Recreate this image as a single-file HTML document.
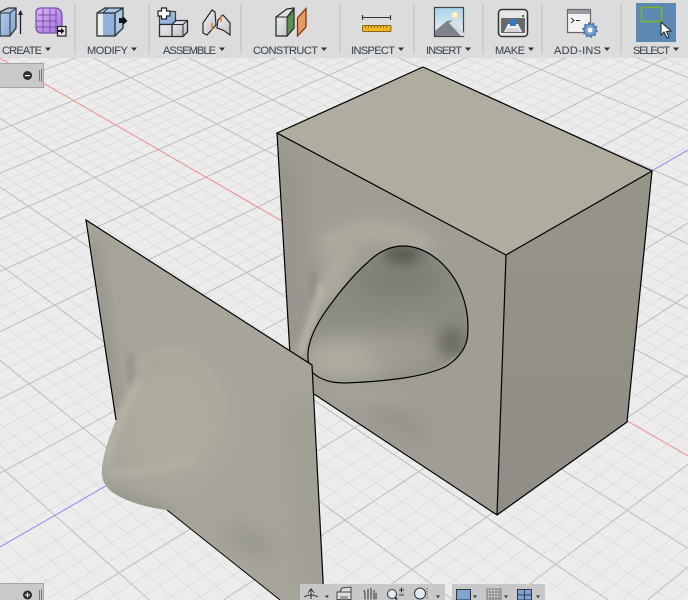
<!DOCTYPE html>
<html><head><meta charset="utf-8"><title>CAD</title>
<style>
html,body{margin:0;padding:0;background:#ececec;width:688px;height:600px;overflow:hidden}
svg{display:block;position:absolute;left:0;top:0;overflow:hidden}
text{font-family:"Liberation Sans",sans-serif;font-size:11px;fill:#3f4a56;stroke:#3f4a56;stroke-width:.12}
</style></head><body>
<svg id="s" width="688" height="600" viewBox="0 0 688 600" xmlns="http://www.w3.org/2000/svg">
<defs>
<filter id="b2" filterUnits="userSpaceOnUse" x="0" y="0" width="688" height="600"><feGaussianBlur stdDeviation="2"/></filter>
<filter id="b3" filterUnits="userSpaceOnUse" x="0" y="0" width="688" height="600"><feGaussianBlur stdDeviation="3.500"/></filter>
<filter id="b6" filterUnits="userSpaceOnUse" x="0" y="0" width="688" height="600"><feGaussianBlur stdDeviation="7"/></filter>
<filter id="b9" filterUnits="userSpaceOnUse" x="0" y="0" width="688" height="600"><feGaussianBlur stdDeviation="10"/></filter>
<filter id="b12" filterUnits="userSpaceOnUse" x="0" y="0" width="688" height="600"><feGaussianBlur stdDeviation="13"/></filter>
<clipPath id="cLeft"><path d="M277 133L506 255L497 515L314 394L290 355Z"/></clipPath>
<clipPath id="cHole"><path d="M312 372C305 360 307 345 316 327C326 308 350 278 367 263C378 252 390 246 403 246C425 246 445 262 457 283C466 300 470 320 467 340C464 352 455 361 445 367C425 376 395 381 345 383C328 383 318 378 312 372Z"/></clipPath>
<clipPath id="cSheet"><path d="M86 220L312 365L324 600L280 600L167 510C150 508 128 503 112 492C104 486 101 478 102 468C104 450 110 436 116 420Z"/></clipPath>
<linearGradient id="gTop" x1="0" y1="0" x2="1" y2="1"><stop offset="0" stop-color="#afac9f"/><stop offset="1" stop-color="#b0ada1"/></linearGradient>
<linearGradient id="gRight" x1="0" y1="0" x2="0" y2="1"><stop offset="0" stop-color="#979489"/><stop offset="1" stop-color="#8f8d85"/></linearGradient>
<linearGradient id="sky" x1="0" y1="0" x2="0" y2="1"><stop offset="0" stop-color="#a9d4ec"/><stop offset="1" stop-color="#e8f2f2"/></linearGradient>
<linearGradient id="blue" x1="0" y1="0" x2="1" y2="1"><stop offset="0" stop-color="#b5cfea"/><stop offset="1" stop-color="#7fa4cf"/></linearGradient>
<linearGradient id="grey" x1="0" y1="0" x2="1" y2="1"><stop offset="0" stop-color="#f4f4f6"/><stop offset="1" stop-color="#b9bec6"/></linearGradient>
<linearGradient id="purp" x1="0" y1="0" x2="1" y2="1"><stop offset="0" stop-color="#d7b6f0"/><stop offset="1" stop-color="#a56fdc"/></linearGradient>
</defs>

<rect width="688" height="600" fill="#ececec"/>
<g id="grid" fill="none"></g>
<line x1="0" y1="58" x2="688" y2="456" stroke="#f08c8c" stroke-width="1"/>
<line x1="0" y1="547" x2="688" y2="150" stroke="#8a8af0" stroke-width="1"/>

<!-- box -->
<path d="M423 67L652 171L506 255L277 133Z" fill="url(#gTop)"/>
<path d="M652 171L506 255L497 515L627 422Z" fill="url(#gRight)"/>
<path d="M277 133L506 255L497 515L314 394L290 355Z" fill="#a09e94"/>
<g clip-path="url(#cLeft)">
<path d="M284 150L296 350" stroke="#94938a" stroke-width="26" fill="none" filter="url(#b12)"/>
<path d="M322 250C350 225 395 225 430 250" stroke="#aeac9f" stroke-width="20" fill="none" filter="url(#b6)"/>
<path d="M325 300C330 280 337 262 352 248" stroke="#aeac9f" stroke-width="18" fill="none" filter="url(#b6)"/>
<path d="M314 272L313 300" stroke="#7f7e75" stroke-width="4" fill="none" filter="url(#b3)"/>
<path d="M322 285C316 310 306 335 300 355" stroke="#bdbbae" stroke-width="6" fill="none" filter="url(#b3)"/>
<path d="M375 408L425 435" stroke="#8d8c83" stroke-width="12" fill="none" filter="url(#b9)"/>
<path d="M330 392C350 392 370 395 400 400" stroke="#aba99c" stroke-width="6" fill="none" filter="url(#b6)"/>
</g>
<path d="M312 372C305 360 307 345 316 327C326 308 350 278 367 263C378 252 390 246 403 246C425 246 445 262 457 283C466 300 470 320 467 340C464 352 455 361 445 367C425 376 395 381 345 383C328 383 318 378 312 372Z" fill="#8c8b81"/>
<g clip-path="url(#cHole)">
<ellipse cx="345" cy="360" rx="50" ry="24" fill="#b0aea1" filter="url(#b12)"/>
<ellipse cx="405" cy="352" rx="38" ry="20" fill="#a09e93" filter="url(#b12)"/>
<ellipse cx="400" cy="280" rx="45" ry="18" fill="#7d7c73" filter="url(#b12)"/>
<ellipse cx="403" cy="254" rx="20" ry="8" fill="#504f49" filter="url(#b6)"/>
<ellipse cx="452" cy="342" rx="13" ry="15" fill="#6d6c64" filter="url(#b6)"/>
<path d="M420 377C435 374 448 366 456 358" stroke="#aaa89c" stroke-width="3" fill="none" filter="url(#b2)"/>
</g>
<g fill="none" stroke="#000" stroke-width="1.200">
<path d="M423 67L652 171L506 255L277 133Z"/>
<path d="M506 255L497 515M652 171L627 422L497 515L314 394M277 133L290 355"/>
<path d="M312 372C305 360 307 345 316 327C326 308 350 278 367 263C378 252 390 246 403 246C425 246 445 262 457 283C466 300 470 320 467 340C464 352 455 361 445 367C425 376 395 381 345 383C328 383 318 378 312 372Z"/>
</g>

<!-- sheet -->
<path d="M86 220L312 365L324 600L280 600L167 510C150 508 128 503 112 492C104 486 101 478 102 468C104 450 110 436 116 420Z" fill="#a7a59a"/>
<g clip-path="url(#cSheet)">
<ellipse cx="170" cy="420" rx="50" ry="60" fill="#aeac9e" filter="url(#b12)"/>
<path d="M140 365C160 340 205 350 220 395C230 435 190 455 125 472" stroke="#aeac9f" stroke-width="6" fill="none" filter="url(#b3)"/>
<path d="M108 472C130 476 165 470 195 458" stroke="#b4b2a5" stroke-width="5" fill="none" filter="url(#b3)"/>
<path d="M106 490C125 502 145 508 170 512" stroke="#8e8d82" stroke-width="9" fill="none" filter="url(#b6)"/>
<path d="M130 355L131 385" stroke="#85847b" stroke-width="4" fill="none" filter="url(#b3)"/>
<path d="M92 240L116 410" stroke="#949389" stroke-width="12" fill="none" filter="url(#b6)"/>
<path d="M140 380C125 405 112 435 106 465" stroke="#b8b6a9" stroke-width="6" fill="none" filter="url(#b3)"/>
<path d="M228 530L272 552" stroke="#8f8e85" stroke-width="12" fill="none" filter="url(#b9)"/>
<path d="M300 400L315 590" stroke="#9e9c92" stroke-width="26" fill="none" filter="url(#b12)"/>
</g>
<g fill="none" stroke="#000" stroke-width="1.200">
<path d="M116 420L86 220L312 365L324 600"/>
<path d="M167 510L280 600" stroke-width="1"/>
</g>

<!-- toolbar -->
<rect width="688" height="58" fill="#dcdcdc"/>
<g fill="#cdcdcd">
<rect x="74" y="4" width="2" height="50"/><rect x="148" y="4" width="2" height="50"/><rect x="240" y="4" width="2" height="50"/><rect x="339" y="4" width="2" height="50"/><rect x="413" y="4" width="2" height="50"/><rect x="482" y="4" width="2" height="50"/><rect x="541" y="4" width="2" height="50"/><rect x="620" y="4" width="2" height="50"/>
</g>

<!-- create -->
<path d="M0 12L8 8H16V28L10 36H0Z" fill="url(#blue)" stroke="#333" stroke-width="1.300"/>
<path d="M0 13H10V36M10 13L16 8" stroke="#333" fill="none"/>
<path d="M20.500 34V11" stroke="#222" stroke-width="1.300"/><path d="M18 15L20.500 10L23 15Z" fill="#222"/>
<path d="M41 8H56Q62 9 62 16V28Q62 33 57 33H42Q36 33 36 27V13Q36 8 41 8Z" fill="url(#purp)" stroke="#7a4fb0" stroke-width="1.300"/>
<path d="M38 15H56M37 21H57M37 27H57M43 9V33M50 9V33M56 9V33" stroke="#7a4fb0" fill="none"/>
<rect x="57.500" y="26.500" width="8.500" height="9.500" fill="#e8e8e8" stroke="#222" stroke-width="1.200"/>
<path d="M58 30H61V28L64.500 31L61 34V32H58Z" fill="#111"/>
<text x="2" y="54" textLength="40">CREATE</text>
<path d="M45 47.500H51L48 51Z" fill="#333"/>

<!-- modify -->
<path d="M105 8H123V28L115 36H97V13Z" fill="#a9c6e6"/>
<path d="M103 13H115V36H103Z" fill="#8fb1da"/>
<path d="M97 13H103V36H97Z" fill="#eceef0"/>
<path d="M97 13L105 8H123V28L115 36H97ZM97 13H115V36M115 13L123 8" stroke="#2b2b2b" stroke-width="1.300" fill="none"/>
<path d="M103 13L108 8" stroke="#2b2b2b" fill="none"/>
<path d="M119 18H123V16L127.500 21L123 25V23H119Z" fill="#111"/>
<text x="87" y="54" textLength="41">MODIFY</text>
<path d="M131 47.500H137L134 51Z" fill="#333"/>

<!-- assemble -->
<rect x="159.500" y="11.500" width="16" height="13" fill="url(#blue)" stroke="#345" stroke-width="1.200"/>
<path d="M159.500 24.500H172V36.500H159.500ZM172 24.500L176 20.500H187.500V32L183 36.500H172Z" fill="url(#grey)" stroke="#2b2b2b" stroke-width="1.300"/>
<path d="M172 24.500H183V36.500M183 24.500L187.500 20.500" stroke="#2b2b2b" fill="none"/>
<path d="M161.500 8H166.500V11H170V16H166.500V19H161.500V16H158V11H161.500Z" fill="#fff" stroke="#222" stroke-width="1.200"/>
<path d="M203 23L212 10L215 12L216 25L207 35L203 33Z" fill="url(#grey)" stroke="#2b2b2b" stroke-width="1.200"/>
<path d="M218 20L223 15L230 23V35L223 30L217 28Z" fill="url(#grey)" stroke="#2b2b2b" stroke-width="1.200"/>
<path d="M212 23V30M221 15V22" stroke="#f07a10" stroke-width="1.500"/>
<text x="163" y="54" textLength="53">ASSEMBLE</text>
<path d="M219 47.500H225L222 51Z" fill="#333"/>

<!-- construct -->
<path d="M276 17L287 9L294 8V28L287 36H276Z" fill="url(#grey)" stroke="#2b2b2b" stroke-width="1.300"/>
<path d="M287 18V36L294 28V9L287 18Z" fill="#5b8f4d" stroke="#2b2b2b"/>
<path d="M276 17H287L294 8" stroke="#2b2b2b" fill="none"/>
<path d="M297.500 18L306 8.500V27L297.500 36Z" fill="#e89a63" stroke="#7a3008" stroke-width="1.200"/>
<text x="253" y="54" textLength="65">CONSTRUCT</text>
<path d="M321 47.500H327L324 51Z" fill="#333"/>

<!-- inspect -->
<path d="M362.500 15V20M390.500 15V20M362.500 17.500H390.500" stroke="#333" fill="none" stroke-width="1.100"/>
<rect x="362.500" y="25.500" width="28.500" height="6" rx="1" fill="#f0b429" stroke="#8a6a10"/>
<path d="M365.500 26V28M368.500 26V28M371.500 26V28M374.500 26V28M377.500 26V28M380.500 26V28M383.500 26V28M386.500 26V28" stroke="#8a6a10"/>
<text x="351" y="54" textLength="44">INSPECT</text>
<path d="M398 47.500H404L401 51Z" fill="#333"/>

<!-- insert -->
<rect x="434.500" y="7.500" width="29" height="29" fill="url(#sky)" stroke="#444" stroke-width="1.200"/>
<circle cx="455" cy="15" r="3" fill="#fff4c8" stroke="#f4e6a8"/>
<path d="M435 31L447 21L453 20L464 35V36H435Z" fill="#7d828c"/>
<path d="M453 20L464 33V36H461L449 23Z" fill="#d8dadd"/>
<text x="426" y="54" textLength="36">INSERT</text>
<path d="M465 47.500H471L468 51Z" fill="#333"/>

<!-- make -->
<rect x="498.500" y="9.500" width="29" height="27" rx="3.500" fill="#e6e6e6" stroke="#333" stroke-width="1.500"/>
<rect x="501" y="18" width="24" height="15" fill="#66696d"/>
<path d="M504 32L508 24H518L522 32Z" fill="#f0f0f0"/>
<path d="M507 29H519M506 31H520" stroke="#bbb"/>
<rect x="510" y="19" width="6" height="7" fill="#3a78c0"/>
<rect x="522" y="15" width="2" height="2" fill="#0a8a20"/>
<text x="495" y="54" textLength="30">MAKE</text>
<path d="M528 47.500H534L531 51Z" fill="#333"/>

<!-- add-ins -->
<rect x="567.500" y="9.500" width="23" height="23" fill="#f2f2f2" stroke="#666" stroke-width="1.200"/>
<rect x="568" y="10" width="22" height="4" fill="#9a9ea4"/>
<path d="M571 18L574 20.500L571 23M576 20.500H580" stroke="#333" fill="none"/>
<circle cx="590" cy="30" r="6" fill="#7aa0d0" stroke="#3f6a9f"/>
<circle cx="590" cy="30" r="7" fill="none" stroke="#4a78b0" stroke-width="1.600" stroke-dasharray="2.200 2.200"/>
<circle cx="590" cy="30" r="2.500" fill="#fff"/>
<text x="554" y="54" textLength="47">ADD-INS</text>
<path d="M604 47.500H610L607 51Z" fill="#333"/>

<!-- select -->
<rect x="636" y="3" width="40" height="39" fill="#5b89b2"/>
<path d="M641.500 7.500H661.500V21.500H641.500Z" fill="none" stroke="#7cb52e" stroke-width="1.400"/>
<path d="M661 22V35L664 32L667 38L669 37L666.500 31.500L671 31Z" fill="#fff" stroke="#222"/>
<text x="633" y="54" textLength="37">SELECT</text>
<path d="M673 47.500H679L676 51Z" fill="#333"/>

<!-- side panels -->
<path d="M0 63.500H43.500V87.500H0Z" fill="#c9c9c9"/>
<path d="M0 63.500H43.500V87.500H0" fill="none" stroke="#a4a4a4"/>
<circle cx="27.500" cy="75.500" r="4.500" fill="#2e2e2e"/>
<rect x="25" y="75" width="5" height="1.200" fill="#fff"/>
<path d="M39.500 70V81M41.500 69V82" stroke="#777"/>
<path d="M0 583.500H43.500V600H0Z" fill="#c9c9c9"/>
<path d="M0 583.500H43.500V600" fill="none" stroke="#a4a4a4"/>
<circle cx="27.500" cy="595" r="4.500" fill="#2e2e2e"/>
<path d="M25 595H30M27.500 592.500V597.500" stroke="#fff"/>
<path d="M39.500 590V600M41.500 589V600" stroke="#777"/>

<!-- bottom nav -->
<rect x="300" y="584" width="145" height="16" fill="#c8c8c8"/>
<rect x="452" y="584" width="93" height="16" fill="#c8c8c8"/>
<path d="M311 599V590M308 593L311 589L314 593" stroke="#222" fill="#fff"/>
<path d="M304 597Q311 593 318 597" fill="none" stroke="#333"/>
<path d="M325 595.500H329L327 598Z" fill="#333"/>
<path d="M337 592H351V599.500H337ZM340 592L342 588L351 587V592" fill="#ddd" stroke="#444"/>
<rect x="340" y="596" width="8" height="3.500" fill="#999"/>
<path d="M365 599.500V594L364 590M368 599.500V589M371 599.500V588M374 599.500V590M376 599.500V593" stroke="#333" fill="none"/>
<circle cx="392" cy="594" r="4.500" fill="#dfeaf4" stroke="#333"/>
<path d="M395 597L397 599.500" stroke="#333" stroke-width="2"/>
<path d="M399 590H404M401.500 587.500V592.500M399 595H404" stroke="#333"/>
<circle cx="420" cy="593.500" r="5.500" fill="#dfeaf4" stroke="#333"/>
<path d="M427 588V600" stroke="#555" stroke-dasharray="1.500 1.500"/>
<path d="M436 595.500H440L438 598Z" fill="#333"/>
<rect x="456.500" y="589.500" width="14" height="10.500" fill="#7fa4cf" stroke="#333"/>
<path d="M473 595.500H477L475 598Z" fill="#333"/>
<path d="M487 589H501V600H487ZM487 592H501M487 595H501M487 598H501M490 589V600M493 589V600M496 589V600M499 589V600" fill="#ddd" stroke="#666" stroke-width=".8"/>
<path d="M504 595.500H508L506 598Z" fill="#333"/>
<path d="M517.500 589.500H531.500V600H517.500ZM524.500 589.500V600M517.500 595H531.500" fill="#7fa4cf" stroke="#335"/>
<path d="M536 595.500H540L538 598Z" fill="#333"/>
</svg>
<script>
(function(){
var g=document.getElementById('grid'),d1='',d2='';
function seg(a,b){
  var x0=0,x1=688,y0=a+b*x0,y1=a+b*x1;
  function cy(lim){return [(lim-a)/b,lim];}
  var p=[[x0,y0],[x1,y1]];
  for(var i=0;i<2;i++){
    if(p[i][1]<0)p[i]=cy(0);
    else if(p[i][1]>600)p[i]=cy(600);
  }
  if(p[0][0]<0||p[0][0]>688||p[1][0]<0||p[1][0]>688)return '';
  return 'M'+p[0][0].toFixed(1)+' '+p[0][1].toFixed(1)+'L'+p[1][0].toFixed(1)+' '+p[1][1].toFixed(1);
}
function fanA(s){return seg(-678+s*1274,s);}
function fanB(s){return seg(-830+s*2400,-s);}
var A=[.24,.26,.28,.30,.32,.34,.36,.385,.412,.44,.47,.503,.538,.578,.625,.679,.74,.815,.898,.99,1.09];
var B=[.272,.287,.302,.318,.334,.349,.365,.382,.40,.418,.437,.459,.484,.512,.543,.577,.615,.657,.704,.756,.816,.88,.95];
function add(L,f){for(var i=0;i<L.length;i++){
  if(Math.abs(L[i]-.578)>1e-6&&Math.abs(L[i]-.577)>1e-6)d2+=f(L[i]);
  if(i<L.length-1)for(var k=1;k<5;k++)d1+=f(L[i]+(L[i+1]-L[i])*k/5);
}}
add(A,fanA);add(B,fanB);
function p(d,c){var e=document.createElementNS('http://www.w3.org/2000/svg','path');e.setAttribute('d',d);e.setAttribute('stroke',c);e.setAttribute('stroke-width','1');g.appendChild(e);}
p(d1,'#dedede');p(d2,'#bdbdbd');
})();
</script>
</body></html>
